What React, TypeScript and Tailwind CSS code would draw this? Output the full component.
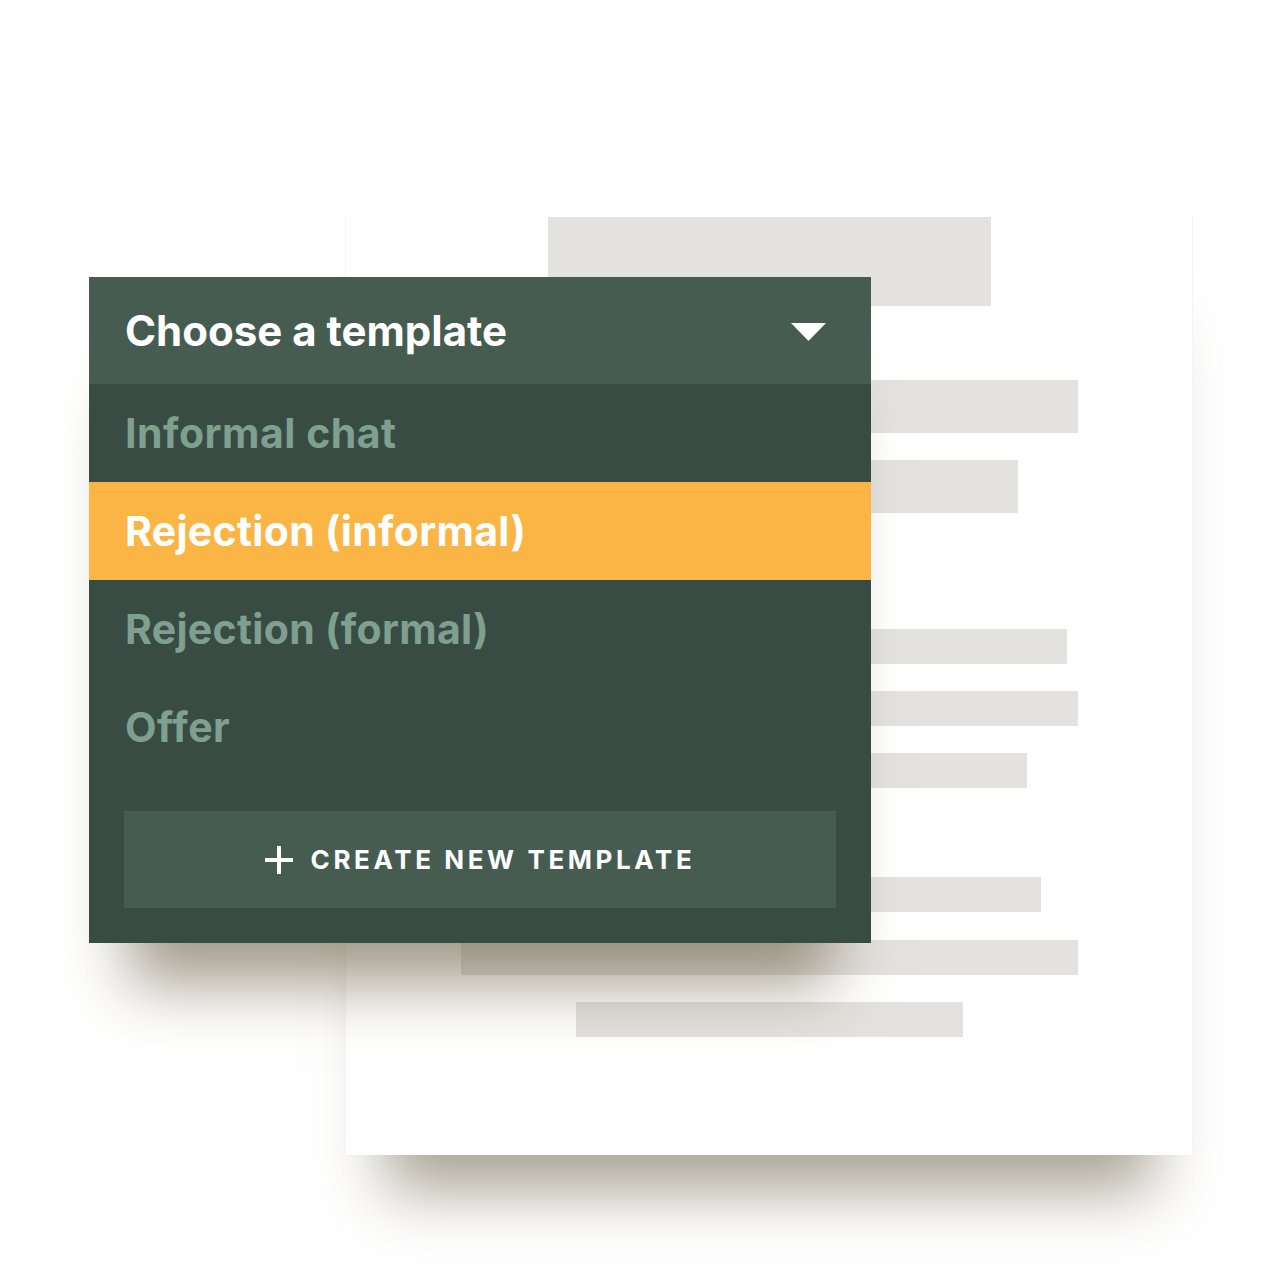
export default function App() {
  const font = { fontFamily: "Inter, 'Noto Sans', sans-serif" };
  return (
    <div className="relative w-[1280px] h-[1280px] bg-white overflow-hidden" style={font}>
      <div className="pl-[345px] pt-[215px]">
        <div className="flex flex-col w-[848px] h-[940px] bg-white border-x border-[#f4f4f4] shadow-[0_75px_60px_-40px_rgba(110,100,75,0.6)]">
          <div className="mt-[2px] ml-[202px] w-[443px] h-[89px] bg-[#e3e2de]" />
          <div className="mt-[74px] ml-[115px] w-[617px] h-[53px] bg-[#e3e2de]" />
          <div className="mt-[27px] ml-[115px] w-[557px] h-[53px] bg-[#e3e2de]" />
          <div className="mt-[116px] ml-[115px] w-[606px] h-[35px] bg-[#e3e2de]" />
          <div className="mt-[27px] ml-[115px] w-[617px] h-[35px] bg-[#e3e2de]" />
          <div className="mt-[27px] ml-[115px] w-[566px] h-[35px] bg-[#e3e2de]" />
          <div className="mt-[89px] ml-[115px] w-[580px] h-[35px] bg-[#e3e2de]" />
          <div className="mt-[28px] ml-[115px] w-[617px] h-[35px] bg-[#e3e2de]" />
          <div className="mt-[27px] ml-[230px] w-[387px] h-[35px] bg-[#e3e2de]" />
        </div>
      </div>

      <div className="absolute left-[89px] top-[277px] w-[782px] h-[666px] flex flex-col bg-[#394c43] shadow-[0_80px_60px_-40px_rgba(110,100,75,0.65)]">
        <div className="h-[107px] bg-[#465c50] flex items-center justify-between pl-[36px] pr-[45px]">
          <span className="text-white font-bold text-[42px] leading-none tracking-[0px]">Choose a template</span>
          <svg width="35" height="18" viewBox="0 0 35 18" className="mt-[2px]">
            <polygon points="0,0 35,0 17.5,18" fill="#ffffff" />
          </svg>
        </div>
        <div className="h-[98px] flex items-center pl-[36px]">
          <span className="text-[#7fa08e] font-bold text-[41px] leading-none tracking-[0.5px]">Informal chat</span>
        </div>
        <div className="h-[98px] flex items-center pl-[36px] bg-[#fbb545]">
          <span className="text-white font-bold text-[41px] leading-none tracking-[0.3px]">Rejection (informal)</span>
        </div>
        <div className="h-[98px] flex items-center pl-[36px]">
          <span className="text-[#7fa08e] font-bold text-[41px] leading-none tracking-[0.3px]">Rejection (formal)</span>
        </div>
        <div className="h-[98px] flex items-center pl-[36px]">
          <span className="text-[#7fa08e] font-bold text-[41px] leading-none tracking-[0.5px]">Offer</span>
        </div>
        <div className="mt-[35px] mx-[35px] h-[97px] bg-[#465c50] flex items-center justify-center gap-[18px]">
          <svg width="28" height="28" viewBox="0 0 28 28">
            <rect x="12" y="0" width="4" height="28" fill="#ffffff" />
            <rect x="0" y="12" width="28" height="4" fill="#ffffff" />
          </svg>
          <span className="text-white font-bold text-[26px] leading-none tracking-[3.6px]">CREATE NEW TEMPLATE</span>
        </div>
      </div>
    </div>
  );
}
